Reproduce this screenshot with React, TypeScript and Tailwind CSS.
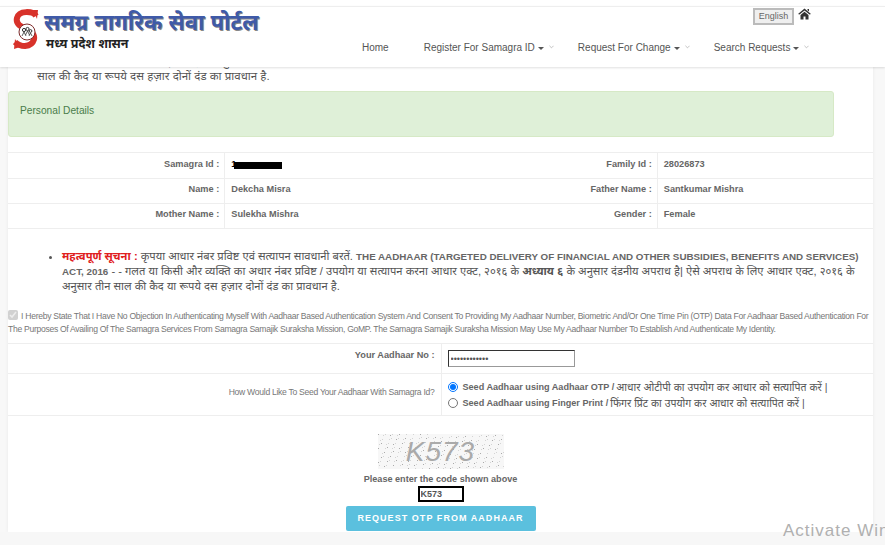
const rows = [
  ['Samagra Id :', '', 'Family Id :', '28026873'],
  ['Name :', 'Dekcha Misra', 'Father Name :', 'Santkumar Mishra'],
  ['Mother Name :', 'Sulekha Mishra', 'Gender :', 'Female'],
]

function Logo() {
  return (
    <svg width="26" height="42" viewBox="0 0 26 42" className="shrink-0">
      <path
        d="M23 7 C20 2 6 1 4 9 C2 17 12 19 17 22 C24 26 22 36 12 37 C7 37 4 35 2 33"
        fill="none"
        stroke="#d8322a"
        strokeWidth="6"
      />
      <path d="M20 1 L25 1 L24 10 Z M1 40 L2 30 L7 38 Z" fill="#d8322a" />
      <circle cx="14" cy="23" r="8" fill="#fff" stroke="#7c2a2a" strokeWidth="1" />
      <circle cx="11" cy="21" r="1.6" fill="none" stroke="#333" />
      <circle cx="14.5" cy="20" r="1.6" fill="none" stroke="#333" />
      <circle cx="17.5" cy="22" r="1.4" fill="none" stroke="#333" />
      <path d="M9 27 L11 23 L13 27 M12.5 26 L14.5 22 L16.5 26 M16 27 L17.5 24 L19 27" fill="none" stroke="#333" strokeWidth="0.8" />
    </svg>
  )
}

function Caret() {
  return <span className="ml-[3px] inline-block border-x-[3px] border-t-[3px] border-x-transparent border-t-[#555] align-middle" />
}

function Chevron() {
  return (
    <svg width="5" height="4" viewBox="0 0 6 4" className="ml-[5px] inline-block align-[2px]">
      <path d="M0.5 0.5 L3 3 L5.5 0.5" fill="none" stroke="#999" strokeWidth="0.7" />
    </svg>
  )
}

function Captcha() {
  const dots = []
  for (let i = 0; i < 260; i++) {
    dots.push(<rect key={i} x={(i * 47) % 126} y={(i * 29) % 35} width="1" height="1" fill={i % 3 ? '#d4d4d4' : '#aaa'} />)
  }
  return (
    <div className="relative flex h-[35px] w-[126px] items-center justify-center bg-[#f7f7f7]">
      <svg width="126" height="35" className="absolute left-0 top-0">{dots}</svg>
      <span className="relative text-[28px] italic leading-none tracking-[1px] text-[#aaa]">K573</span>
    </div>
  )
}

export default function App() {
  return (
    <div className="h-[545px] w-[885px] overflow-hidden bg-white font-['Liberation_Sans','Noto_Sans',sans-serif] text-[#555]">
      <div className="relative z-10 mt-[6px] flex h-[61px] border-t border-[#eee] bg-white shadow-[0_1px_2px_rgba(0,0,0,0.12)]">
        <div className="ml-[13px] mt-[2px] flex w-[247px] shrink-0 items-start gap-[5px]">
          <Logo />
          <div>
            <div className="mt-[1px] whitespace-nowrap text-[22px] font-bold leading-[25px] text-[#3f5aa8] [text-shadow:1px_1px_0_#888]">समग्र नागरिक सेवा पोर्टल</div>
            <div className="ml-[2px] whitespace-nowrap text-[12.5px] font-bold leading-[18px] text-[#222]">मध्य प्रदेश शासन</div>
          </div>
        </div>
        <div className="ml-[102px] flex flex-col">
          <div className="flex h-[35px] items-start">
            <span className="ml-[391px] mt-[1px] flex h-[17px] w-[41px] items-center justify-center border-2 border-[#bbb] bg-[#efefef] text-[9px] text-[#666]">English</span>
            <svg width="13" height="12" viewBox="0 0 13 12" className="ml-[4px] mt-[1px]">
              <path d="M6.5 0.5 L13 6 L11.5 6.5 L6.5 2.5 L1.5 6.5 L0 6 Z M2.5 7 L6.5 3.7 L10.5 7 V11.5 H7.5 V8.5 H5.5 V11.5 H2.5 Z M9.5 1 H11 V3.5 L9.5 2.3 Z" fill="#333" />
            </svg>
          </div>
          <nav className="flex whitespace-nowrap text-[10px] leading-[12px] text-[#555]">
            <span>Home</span>
            <span className="ml-[35px]">Register For Samagra ID<Caret /><Chevron /></span>
            <span className="ml-[24px]">Request For Change<Caret /><Chevron /></span>
            <span className="ml-[24px]">Search Requests<Caret /><Chevron /></span>
          </nav>
        </div>
      </div>

      <div className="-mt-[12px] flex h-[477px] bg-[#f8f8f8]">
        <main className="ml-[8px] w-[865px] bg-white shadow-[0_0_4px_rgba(0,0,0,0.06)]">
          <div className="ml-[29px] h-[31px] overflow-hidden text-[11.5px] leading-[14px]">
            <p className="whitespace-nowrap">ऐसे अपराध के लिए आधार एक्ट, २०१६ के अनुसार तीन गलत या किसी और व्यक्ति का आधार नंबर प्रविष्ट उपयोग या सत्यापन करना आधार एक्ट</p>
            <p>साल की कैद या रूपये दस हज़ार दोनों दंड का प्रावधान है.</p>
          </div>
          <div className="mt-[5px] h-[46px] w-[826px] rounded-[3px] border border-[#d6e9c6] bg-[#dff0d8] pl-[11px] pt-[12px] text-[10.2px] leading-[13px] text-[#4a7d4b]">Personal Details</div>

          <div className="mt-[15px] border-y border-[#eee]">
            {rows.map((r, i) => (
              <div key={r[0]} className={i ? 'grid h-[25px] grid-cols-4 border-t border-[#eee]' : 'grid h-[25px] grid-cols-4'}>
                <div className="flex items-center justify-end pb-[2px] pr-[5px] text-[9.2px] font-bold text-[#666]">{r[0]}</div>
                <div className="relative flex items-center border-l border-[#eee] pb-[2px] pl-[6px] text-[9.2px] font-bold text-[#666]">
                  {r[1]}
                  {i === 0 && <span className="text-black">1</span>}
                  {i === 0 && <span className="absolute left-[9px] top-[9px] h-[7px] w-[48px] bg-black" />}
                </div>
                <div className="flex items-center justify-end border-l border-transparent pb-[2px] pr-[5px] text-[9.2px] font-bold text-[#666]">{r[2]}</div>
                <div className="flex items-center border-l border-[#eee] pb-[2px] pl-[6px] text-[9.2px] font-bold text-[#666]">{r[3]}</div>
              </div>
            ))}
          </div>

          <ul className="ml-[54px] mr-[6px] mt-[20px] list-disc text-[11.2px] leading-[14px] text-[#555]">
            <li>
              <span className="font-bold text-[#e02020]">महत्वपूर्ण सूचना :</span> कृपया आधार नंबर प्रविष्ट एवं सत्यापन सावधानी बरतें. <b className="text-[9.8px] text-[#666]">THE AADHAAR (TARGETED DELIVERY OF FINANCIAL AND OTHER SUBSIDIES, BENEFITS AND SERVICES) ACT, 2016</b> - - गलत या किसी और व्यक्ति का अधार नंबर प्रविष्ट / उपयोग या सत्यापन करना आधार एक्ट, २०१६ के <b>अध्याय ६</b> के अनुसार दंडनीय अपराध है| ऐसे अपराध के लिए आधार एक्ट, २०१६ के अनुसार तीन साल की कैद या रूपये दस हज़ार दोनों दंड का प्रावधान है.
            </li>
          </ul>

          <div className="mt-[17px] text-[8.6px] leading-[13px] tracking-[-0.3px] text-[#777]">
            <input type="checkbox" checked readOnly disabled className="mr-[1px] h-[10px] w-[10px] align-[-1px]" /> I Hereby State That I Have No Objection In Authenticating Myself With Aadhaar Based Authentication System And Consent To Providing My Aadhaar Number, Biometric And/Or One Time Pin (OTP) Data For Aadhaar Based Authentication For The Purposes Of Availing Of The Samagra Services From Samagra Samajik Suraksha Mission, GoMP. The Samagra Samajik Suraksha Mission May Use My Aadhaar Number To Establish And Authenticate My Identity.
          </div>

          <div className="mt-[7px] grid h-[30px] grid-cols-2 border-t border-[#eee]">
            <div className="flex items-center justify-end pb-[6px] pr-[6px] text-[9.2px] font-bold text-[#666]">Your Aadhaar No :</div>
            <div className="flex items-center border-l border-[#eee] pl-[6px]">
              <input type="password" value="123456789012" readOnly className="h-[17px] w-[127px] border border-[#333] border-b-[#999] border-r-[#999] bg-white px-[2px] text-[9px] outline-none" />
            </div>
          </div>
          <div className="grid h-[43px] grid-cols-2 border-y border-[#eee]">
            <div className="flex items-center justify-end pb-[4px] pr-[6px] text-[8.6px] tracking-[-0.29px] text-[#777]">How Would Like To Seed Your Aadhaar With Samagra Id?</div>
            <div className="flex flex-col justify-center border-l border-[#eee] pl-[6px] text-[9.1px] font-bold leading-[16px] text-[#666]">
              <label className="flex items-center whitespace-nowrap"><input type="radio" name="seed" defaultChecked className="mr-[5px] h-[10px] w-[10px]" />Seed Aadhaar using Aadhaar OTP / <span className="ml-[2px] text-[10.5px] font-normal text-[#555]">आधार ओटीपी का उपयोग कर आधार को सत्यापित करें |</span></label>
              <label className="flex items-center whitespace-nowrap"><input type="radio" name="seed" className="mr-[5px] h-[10px] w-[10px]" />Seed Aadhaar using Finger Print / <span className="ml-[2px] text-[10.5px] font-normal text-[#555]">फिंगर प्रिंट का उपयोग कर आधार को सत्यापित करें |</span></label>
            </div>
          </div>

          <div className="mt-[18px] flex flex-col items-center bg-white">
            <Captcha />
            <div className="mt-[4px] text-[9.1px] font-bold leading-[12px] text-[#666]">Please enter the code shown above</div>
            <input value="K573" readOnly className="mt-[1px] h-[16px] w-[46px] border-2 border-black bg-white px-[1px] text-[9px] font-bold text-[#555] outline-none" />
            <button className="mt-[4px] h-[25px] w-[190px] rounded-[2px] bg-[#5bc0de] text-[9px] font-bold tracking-[1.05px] text-white">REQUEST OTP FROM AADHAAR</button>
          </div>
        </main>
      </div>
      <div className="relative h-[14px] bg-[#f7f7f7]">
        <span className="absolute -top-[10px] left-[783px] whitespace-nowrap text-[17px] leading-[18px] tracking-[1px] text-[#b0b0b0]">Activate Windows</span>
      </div>
    </div>
  )
}
